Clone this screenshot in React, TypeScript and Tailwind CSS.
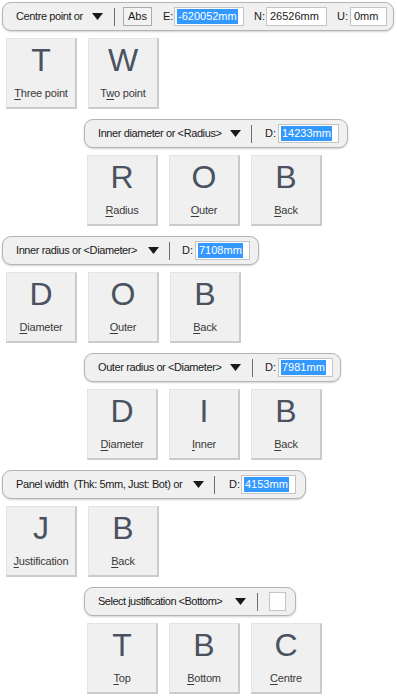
import React from 'react'

type Field = { label?: string; lw?: number; ml: number; value: string; w: number; selected?: boolean }
type Btn = { key: string; label: string; u: number }
type Section = {
  indent: boolean
  barW: number
  prompt: string
  promptW: number
  triMl: number
  sepMl: number
  abs?: boolean
  fields: Field[]
  buttons: Btn[]
  tight?: boolean
}

const sections: Section[] = [
  {
    indent: false, barW: 392, prompt: 'Centre point or', promptW: 69, triMl: 7, sepMl: 11, abs: true,
    fields: [
      { label: 'E:', lw: 11, ml: 11, value: '-620052mm', w: 70, selected: true },
      { label: 'N:', lw: 12, ml: 10, value: '26526mm', w: 61 },
      { label: 'U:', lw: 13, ml: 10, value: '0mm', w: 37 },
    ],
    buttons: [
      { key: 'T', label: 'Three point', u: 0 },
      { key: 'W', label: 'Two point', u: 1 },
    ],
  },
  {
    indent: true, barW: 264, prompt: 'Inner diameter or <Radius>', promptW: 125, triMl: 7, sepMl: 10,
    fields: [{ label: 'D:', lw: 13, ml: 13, value: '14233mm', w: 61, selected: true }],
    buttons: [
      { key: 'R', label: 'Radius', u: 0 },
      { key: 'O', label: 'Outer', u: 0 },
      { key: 'B', label: 'Back', u: 0 },
    ],
  },
  {
    indent: false, barW: 257, prompt: 'Inner radius or <Diameter>', promptW: 125, triMl: 7, sepMl: 10,
    fields: [{ label: 'D:', lw: 13, ml: 12, value: '7108mm', w: 55, selected: true }],
    buttons: [
      { key: 'D', label: 'Diameter', u: 0 },
      { key: 'O', label: 'Outer', u: 0 },
      { key: 'B', label: 'Back', u: 0 },
    ],
  },
  {
    indent: true, barW: 257, prompt: 'Outer radius or <Diameter>', promptW: 126, triMl: 6, sepMl: 11,
    fields: [{ label: 'D:', lw: 13, ml: 12, value: '7981mm', w: 55, selected: true }],
    buttons: [
      { key: 'D', label: 'Diameter', u: 0 },
      { key: 'I', label: 'Inner', u: 0 },
      { key: 'B', label: 'Back', u: 0 },
    ],
  },
  {
    indent: false, barW: 304, prompt: 'Panel width\u00a0 (Thk: 5mm, Just: Bot) or', promptW: 171, triMl: 6, sepMl: 10,
    fields: [{ label: 'D:', lw: 12, ml: 14, value: '4153mm', w: 55, selected: true }],
    buttons: [
      { key: 'J', label: 'Justification', u: 0 },
      { key: 'B', label: 'Back', u: 0 },
    ],
  },
  {
    indent: true, barW: 212, prompt: 'Select justification <Bottom>', promptW: 130, triMl: 7, sepMl: 11, tight: true,
    fields: [{ ml: 11, value: '', w: 17 }],
    buttons: [
      { key: 'T', label: 'Top', u: 0 },
      { key: 'B', label: 'Bottom', u: 0 },
      { key: 'C', label: 'Centre', u: 0 },
    ],
  },
]

function Triangle() {
  return (
    <svg width="11" height="7" viewBox="0 0 11 7" className="shrink-0">
      <path d="M0 0h11L5.5 7z" fill="#1a1a1a" />
    </svg>
  )
}

function Input({ f }: { f: Field }) {
  return (
    <div
      className="h-[19px] bg-white border border-[#c4c4c4] flex items-center pl-[2px] overflow-hidden whitespace-nowrap"
      style={{ width: f.w }}
    >
      {f.value && (
        <span className={f.selected ? 'bg-[#3399ff] text-white leading-[15px] px-[1px]' : 'text-[#1a1a1a] leading-[15px] px-[1px]'}>
          {f.value}
        </span>
      )}
    </div>
  )
}

function Bar({ s }: { s: Section }) {
  return (
    <div
      className="h-[29px] flex items-center pl-[13px] bg-[#f0f0f0] border border-[#b4b4b4] rounded-[9px] shadow-[0_1px_2px_rgba(0,0,0,0.18)] text-[#1a1a1a]"
      style={{ width: s.barW }}
    >
      <span
        className={'whitespace-nowrap shrink-0 ' + (s.tight ? 'tracking-[-0.5px]' : 'tracking-[-0.4px]')}
        style={{ width: s.promptW }}
      >
        {s.prompt}
      </span>
      <div style={{ marginLeft: s.triMl }}>
        <Triangle />
      </div>
      <div className="w-px h-[18px] bg-[#6e6e6e] shrink-0" style={{ marginLeft: s.sepMl }} />
      {s.abs && (
        <div className="ml-[8px] w-[29px] h-[19px] border border-[#ababab] bg-[#f3f3f3] flex items-center justify-center shrink-0">
          Abs
        </div>
      )}
      {s.fields.map((f, i) => (
        <div key={i} className="flex items-center shrink-0" style={{ marginLeft: f.ml }}>
          {f.label && <span style={{ width: f.lw }}>{f.label}</span>}
          <Input f={f} />
        </div>
      ))}
    </div>
  )
}

function Button({ b }: { b: Btn }) {
  const pre = b.label.slice(0, b.u)
  const ch = b.label.charAt(b.u)
  const post = b.label.slice(b.u + 1)
  return (
    <div className="w-[71px] h-[71px] bg-[#f0f0f0] border-t border-l border-[#e4e4e4] border-r-2 border-b-2 border-r-[#cbcbcb] border-b-[#cbcbcb] flex flex-col items-center">
      <div className="mt-[2px] text-[32px] leading-[38px] text-[#4a5262]">{b.key}</div>
      <div className="mt-[6px] text-[11px] text-[#3a3a3a] whitespace-nowrap tracking-[-0.2px]">
        {pre}
        <span className="underline underline-offset-[2px] decoration-1">{ch}</span>
        {post}
      </div>
    </div>
  )
}

export default function App() {
  return (
    <div className="w-[397px] h-[696px] bg-white overflow-hidden pt-[2px] font-['Liberation_Sans',Arial,sans-serif] text-[11px]">
      {sections.map((s, i) => (
        <div key={i} className="flex flex-col mb-[10px]">
          <div className={s.indent ? 'ml-[84px]' : 'ml-[2px]'}>
            <Bar s={s} />
          </div>
          <div className={'flex gap-[11px] mt-[7px] ' + (s.indent ? 'ml-[87px]' : 'ml-[6px]')}>
            {s.buttons.map((b, j) => (
              <Button key={j} b={b} />
            ))}
          </div>
        </div>
      ))}
    </div>
  )
}
